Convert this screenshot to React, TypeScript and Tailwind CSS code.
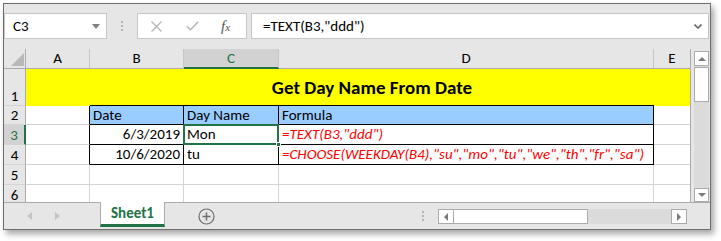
import React from "react";

const F = { fontFamily: "Carlito, Lato, 'Open Sans', sans-serif" };

function ColHead({ label, w, sel, last }: { label: string; w: string; sel?: boolean; last?: boolean }) {
  return (
    <div
      className={`${w} h-full flex items-center justify-center text-[15px] ${
        sel ? "bg-[#d2d2d2] text-[#217346] border-b-2 border-b-[#217346]" : "bg-[#e6e6e6] text-black border-b border-b-[#ababab]"
      } ${last ? "" : "border-r border-r-[#c6c6c6]"}`}
    >
      {label}
    </div>
  );
}

function RowHead({ n, sel, h, bottom }: { n: string; sel?: boolean; h: string; bottom?: boolean }) {
  return (
    <div
      className={`${h} w-[22px] flex ${bottom ? "items-end" : "items-center"} justify-center text-[15px] leading-[18px] border-b border-b-[#d4d4d4] ${
        sel ? "bg-[#d2d2d2] text-[#217346] border-r-2 border-r-[#217346]" : "bg-[#e6e6e6] text-black border-r border-r-[#ababab]"
      }`}
    >
      {n}
    </div>
  );
}

export default function App() {
  const red = "text-[#ff0000] italic";
  return (
    <div className="w-[721px] h-[241px] bg-white overflow-hidden" style={F}>
      <div className="ml-[3px] mt-[3px] w-[708px] h-[227px] border border-[#6e6e6e] bg-[#e6e6e6] shadow-[3px_4px_6px_rgba(0,0,0,0.35)] flex flex-col overflow-hidden">
        {/* Formula bar */}
        <div className="h-[45px] shrink-0 flex items-start pt-[9px]">
          <div className="w-[103px] h-[26px] bg-white border border-[#c6c6c6] flex items-center pl-[8px] pr-[6px] text-[15px] text-black">
            <span className="flex-1">C3</span>
            <svg width="8" height="5" viewBox="0 0 8 5"><path d="M0 0H8L4 5Z" fill="#7f7f7f" /></svg>
          </div>
          <div className="w-[30px] h-[26px] flex flex-col items-center justify-center gap-[2px]">
            <div className="w-[2px] h-[2px] bg-[#b3b3b3]" />
            <div className="w-[2px] h-[2px] bg-[#b3b3b3]" />
            <div className="w-[2px] h-[2px] bg-[#b3b3b3]" />
          </div>
          <div className="w-[110px] h-[26px] bg-white border border-[#c6c6c6] flex items-center">
            <svg className="ml-[13px]" width="11" height="11" viewBox="0 0 11 11">
              <path d="M0.5 0.5L10.5 10.5M10.5 0.5L0.5 10.5" stroke="#b5b5b5" strokeWidth="1.3" fill="none" />
            </svg>
            <svg className="ml-[24px]" width="13" height="10" viewBox="0 0 13 10">
              <path d="M0.8 5.2L4.5 8.8L12.2 0.8" stroke="#b5b5b5" strokeWidth="1.5" fill="none" />
            </svg>
            <span
              className="ml-[22px] text-[15px] italic text-[#555]"
              style={{ fontFamily: "'Liberation Serif', 'DejaVu Serif', serif" }}
            >
              f<span className="text-[11px]">x</span>
            </span>
          </div>
          <div className="ml-[4px] w-[458px] h-[26px] bg-white border border-[#c6c6c6] flex items-center pl-[11px] pr-[6px] text-[15px] text-black">
            <span className="flex-1">=TEXT(B3,"ddd")</span>
            <svg width="8" height="5" viewBox="0 0 8 5">
              <path d="M0.5 0.5L4 4L7.5 0.5" stroke="#666" strokeWidth="1.6" fill="none" />
            </svg>
          </div>
        </div>

        {/* Grid + vertical scrollbar */}
        <div className="h-[153px] shrink-0 flex">
          <div className="w-[687px] h-full overflow-hidden border-r border-r-[#ababab] bg-white">
            {/* header */}
            <div className="flex h-[20px]">
              <div className="w-[22px] h-full bg-[#e6e6e6] border-r border-r-[#ababab] border-b border-b-[#ababab] flex items-end justify-end pr-[1px] pb-[2px]">
                <svg width="13" height="13" viewBox="0 0 13 13"><path d="M13 0V13H0Z" fill="#b8b8b8" /></svg>
              </div>
              <ColHead label="A" w="w-[64px]" />
              <ColHead label="B" w="w-[94px]" />
              <ColHead label="C" w="w-[95px]" sel />
              <ColHead label="D" w="w-[375px]" />
              <ColHead label="E" w="w-[36px]" last />
            </div>
            {/* row 1 */}
            <div className="flex h-[37px]">
              <RowHead n="1" h="h-[37px]" bottom />
              <div className="w-[64px] h-full bg-[#ffff00]" />
              <div className="w-[564px] h-full bg-[#ffff00] border-b border-b-black flex items-center justify-center pt-[2px] text-[19px] font-bold text-black">
                Get Day Name From Date
              </div>
              <div className="w-[36px] h-full bg-[#ffff00]" />
            </div>
            {/* row 2 */}
            <div className="flex h-[19px] text-[15px] leading-[18px]">
              <RowHead n="2" h="h-[19px]" />
              <div className="w-[64px] h-full border-r border-r-black border-b border-b-[#d4d4d4]" />
              <div className="w-[94px] h-full bg-[#99ccff] border-r border-r-black border-b border-b-black pl-[3px]">Date</div>
              <div className="w-[95px] h-full bg-[#99ccff] border-r border-r-black border-b border-b-black pl-[3px]">Day Name</div>
              <div className="w-[375px] h-full bg-[#99ccff] border-r border-r-black border-b border-b-black pl-[3px]">Formula</div>
              <div className="w-[36px] h-full border-b border-b-[#d4d4d4]" />
            </div>
            {/* row 3 */}
            <div className="flex h-[20px] text-[15px] leading-[19px]">
              <RowHead n="3" h="h-[20px]" sel />
              <div className="w-[64px] h-full border-r border-r-black border-b border-b-[#d4d4d4]" />
              <div className="w-[94px] h-full border-r border-r-black border-b border-b-black pr-[3px] text-right">6/3/2019</div>
              <div className="relative w-[95px] h-full border-r border-r-black border-b border-b-black pl-[3px]">
                Mon
                <div className="absolute -left-[1px] -top-[1px] w-[96px] h-[21px] border-2 border-[#217346]" />
                <div className="absolute -right-[3px] -bottom-[3px] w-[5px] h-[5px] bg-[#217346] border border-white" />
              </div>
              <div className={`w-[375px] h-full border-r border-r-black border-b border-b-black pl-[3px] ${red}`}>=TEXT(B3,"ddd")</div>
              <div className="w-[36px] h-full border-b border-b-[#d4d4d4]" />
            </div>
            {/* row 4 */}
            <div className="flex h-[20px] text-[15px] leading-[19px]">
              <RowHead n="4" h="h-[20px]" />
              <div className="w-[64px] h-full border-r border-r-black border-b border-b-[#d4d4d4]" />
              <div className="w-[94px] h-full border-r border-r-black border-b border-b-black pr-[3px] text-right">10/6/2020</div>
              <div className="w-[95px] h-full border-r border-r-black border-b border-b-black pl-[3px]">tu</div>
              <div className={`w-[375px] h-full border-r border-r-black border-b border-b-black pl-[3px] whitespace-nowrap ${red}`}>
                =CHOOSE(WEEKDAY(B4),"su","mo","tu","we","th","fr","sa")
              </div>
              <div className="w-[36px] h-full border-b border-b-[#d4d4d4]" />
            </div>
            {/* rows 5,6 */}
            {["5", "6"].map((n) => (
              <div key={n} className="flex h-[20px]">
                <RowHead n={n} h="h-[20px]" />
                <div className="w-[64px] h-full border-r border-r-[#d4d4d4] border-b border-b-[#d4d4d4]" />
                <div className="w-[94px] h-full border-r border-r-[#d4d4d4] border-b border-b-[#d4d4d4]" />
                <div className="w-[95px] h-full border-r border-r-[#d4d4d4] border-b border-b-[#d4d4d4]" />
                <div className="w-[375px] h-full border-r border-r-[#d4d4d4] border-b border-b-[#d4d4d4]" />
                <div className="w-[36px] h-full border-b border-b-[#d4d4d4]" />
              </div>
            ))}
          </div>
          {/* vertical scrollbar */}
          <div className="ml-[3px] w-[15px] h-full pt-[2px] flex flex-col bg-[#e6e6e6]">
            <div className="h-[15px] bg-white border border-[#ababab] flex items-center justify-center">
              <svg width="8" height="4" viewBox="0 0 8 4"><path d="M0 4H8L4 0Z" fill="#7a7a7a" /></svg>
            </div>
            <div className="flex-1 bg-[#dbdbdb] flex flex-col pt-[1px]">
              <div className="h-[35px] bg-white border border-[#ababab]" />
            </div>
            <div className="h-[14px] bg-white border border-[#ababab] flex items-center justify-center">
              <svg width="8" height="4" viewBox="0 0 8 4"><path d="M0 0H8L4 4Z" fill="#7a7a7a" /></svg>
            </div>
          </div>
        </div>

        {/* Sheet tabs bar */}
        <div className="h-[27px] shrink-0 flex items-start border-t border-t-[#ababab] bg-[#e6e6e6]">
          <div className="w-[96px] h-[26px] flex items-center">
            <svg className="ml-[23px]" width="5" height="8" viewBox="0 0 5 8"><path d="M5 0V8L0 4Z" fill="#c4c4c4" /></svg>
            <svg className="ml-[23px]" width="5" height="8" viewBox="0 0 5 8"><path d="M0 0V8L5 4Z" fill="#c4c4c4" /></svg>
          </div>
          <div className="-mt-px w-[65px] h-[25px] bg-white border-x border-x-[#ababab] border-b-[3px] border-b-[#217346] flex items-center justify-center pt-[1px] text-[15px] font-bold text-[#217346]">
            Sheet1
          </div>
          <div className="ml-[33px] h-[26px] flex items-center">
            <svg width="17" height="17" viewBox="0 0 17 17">
              <circle cx="8.5" cy="8.5" r="7.5" stroke="#6f6f6f" strokeWidth="1.2" fill="none" />
              <path d="M8.5 4.5V12.5M4.5 8.5H12.5" stroke="#6f6f6f" strokeWidth="1.5" />
            </svg>
          </div>
          <div className="ml-[207px] h-[26px] flex flex-col items-center justify-center gap-[2px]">
            <div className="w-[2px] h-[2px] bg-[#b3b3b3]" />
            <div className="w-[2px] h-[2px] bg-[#b3b3b3]" />
            <div className="w-[2px] h-[2px] bg-[#b3b3b3]" />
          </div>
          <div className="ml-[14px] mt-[6px] flex h-[15px]">
            <div className="w-[16px] h-full bg-white border border-[#ababab] flex items-center justify-center">
              <svg width="4" height="8" viewBox="0 0 4 8"><path d="M4 0V8L0 4Z" fill="#7a7a7a" /></svg>
            </div>
            <div className="w-[134px] h-full bg-white border-y border-r border-[#ababab]" />
            <div className="w-[83px] h-full bg-[#dbdbdb]" />
            <div className="w-[16px] h-full bg-white border border-[#ababab] flex items-center justify-center">
              <svg width="4" height="8" viewBox="0 0 4 8"><path d="M0 0V8L4 4Z" fill="#7a7a7a" /></svg>
            </div>
          </div>
        </div>
      </div>
    </div>
  );
}
